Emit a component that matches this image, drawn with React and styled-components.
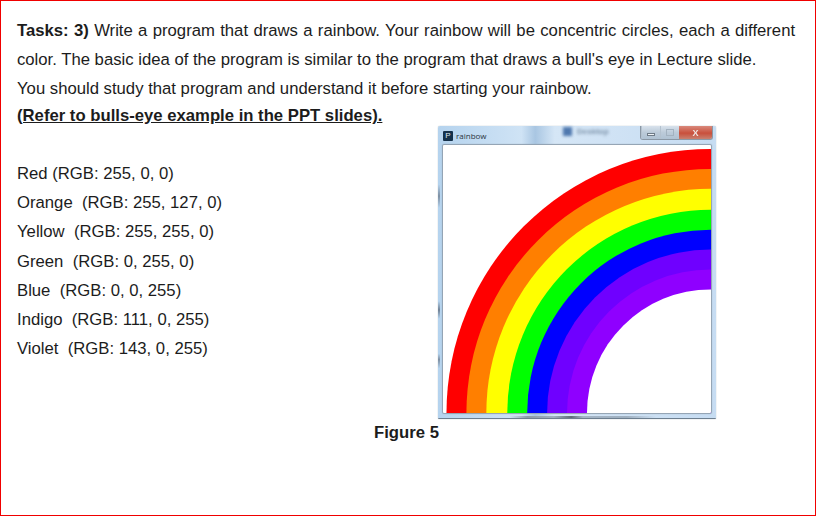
import React from "react";
import styled, { createGlobalStyle } from "styled-components";

const colors = [
  { name: "Red", gap: " ", rgb: "255, 0, 0" },
  { name: "Orange", gap: "  ", rgb: "255, 127, 0" },
  { name: "Yellow", gap: "  ", rgb: "255, 255, 0" },
  { name: "Green", gap: "  ", rgb: "0, 255, 0" },
  { name: "Blue", gap: "  ", rgb: "0, 0, 255" },
  { name: "Indigo", gap: "  ", rgb: "111, 0, 255" },
  { name: "Violet", gap: "  ", rgb: "143, 0, 255" },
];

const bands = [
  { r: 265, fill: "#ff0000" },
  { r: 245, fill: "#ff7f00" },
  { r: 225, fill: "#ffff00" },
  { r: 204, fill: "#00ff00" },
  { r: 184, fill: "#0000ff" },
  { r: 164, fill: "#6f00ff" },
  { r: 144, fill: "#8f00ff" },
  { r: 124, fill: "#ffffff" },
];

const GlobalStyle = createGlobalStyle`
  html, body {
    margin: 0;
    padding: 0;
    background: #fff;
  }
  body {
    font-family: "Liberation Sans", Arial, sans-serif;
    color: #1c1c1c;
  }
`;

const Page = styled.div`
  width: 816px;
  height: 516px;
  box-sizing: border-box;
  border: 1px solid #f00000;
  padding: 15px 16px 0;
  overflow: hidden;
`;

const Line = styled.p`
  margin: 0;
  font-size: 16.7px;
  line-height: 29px;
  white-space: nowrap;
  word-spacing: ${(props) => props.$spread || 0}px;
`;

const Refer = styled(Line)`
  font-weight: 700;
  line-height: 26px;
  text-decoration: underline;
`;

const Columns = styled.div`
  display: flex;
  align-items: flex-start;
`;

const ColorList = styled.ul`
  list-style: none;
  margin: 0;
  padding: 30px 0 0;
  width: 357px;
`;

const ColorItem = styled.li`
  font-size: 16.7px;
  line-height: 29.2px;
  white-space: pre;
`;

const Figure = styled.figure`
  margin: -3px 0 0;
  display: flex;
  flex-direction: column;
`;

const Window = styled.div`
  position: relative;
  margin-left: 64px;
  width: 278px;
  height: 293px;
  box-sizing: border-box;
  padding: 0 5px 5px;
  display: flex;
  flex-direction: column;
  border-radius: 2px 2px 1px 1px;
  border-bottom: 1px solid #6d7f90;
  box-shadow: 0 0 1px #7f8c98;
  background:
    linear-gradient(180deg, transparent 20%, #7d8fa3 24%, transparent 28%, transparent 60%, #6f8195 63%, transparent 66%, transparent 78%, #7d8fa3 80%, transparent 83%) left / 2px 100% no-repeat,
    linear-gradient(90deg, #b5d3ee 0%, #cfe3f5 30%, #a9c6e2 35%, #d5e6f6 42%, #c6dcf2 100%);
`;

const BottomShade = styled.span`
  position: absolute;
  left: 72px;
  right: 60px;
  bottom: 0;
  height: 2px;
  background: linear-gradient(90deg, transparent 0%, #8c9aa8 12%, #9fb0c0 30%, #5f6c78 42%, #a4b5c6 50%, #9fb0c0 80%, transparent 100%);
`;

const TitleBar = styled.div`
  position: relative;
  height: 19px;
  flex: none;
  display: flex;
  align-items: center;
  gap: 3px;
`;

const AppIcon = styled.span`
  width: 10px;
  height: 10px;
  border-radius: 1px;
  background: #14304a;
  color: #dfe8f0;
  font-size: 8px;
  line-height: 10px;
  text-align: center;
`;

const TitleText = styled.span`
  font-family: "Open Sans", sans-serif;
  font-size: 8px;
  color: #2a343e;
`;

const BlurredDesktop = styled.span`
  position: absolute;
  left: 120px;
  top: 1px;
  display: flex;
  align-items: center;
  gap: 5px;
  font-size: 8px;
  font-weight: 700;
  color: #7d93aa;
  filter: blur(1.4px);

  &::before {
    content: "";
    width: 9px;
    height: 9px;
    background: #4f78ae;
  }
`;

const Controls = styled.div`
  position: absolute;
  right: -2px;
  top: 0;
  display: flex;
  height: 13px;
  border: 1px solid #8b98a5;
  border-top: none;
  border-radius: 0 0 3px 3px;
  overflow: hidden;
  filter: blur(0.4px);
`;

const ControlButton = styled.span`
  width: ${(props) => (props.$close ? 33 : 18)}px;
  display: flex;
  align-items: center;
  justify-content: center;
  border-left: ${(props) => (props.$close ? "none" : "1px solid #b4c2cf")};
  color: #efe6e2;
  font-size: 9px;
  font-weight: 700;
  background: ${(props) =>
    props.$close
      ? "linear-gradient(180deg, #d9897c 0%, #c9503c 55%, #c9806f 100%)"
      : "linear-gradient(180deg, #d8e2ec 0%, #bccbd9 50%, #b0c2d3 100%)"};
`;

const MinimizeGlyph = styled.i`
  width: 8px;
  height: 3px;
  margin-top: 4px;
  background: #eef2f6;
  border: 1px solid #6f7b87;
  box-sizing: border-box;
`;

const MaximizeGlyph = styled.i`
  width: 8px;
  height: 7px;
  border: 1px solid #a3b2c0;
  box-sizing: border-box;
`;

const Canvas = styled.svg`
  display: block;
  width: 268px;
  height: 269px;
  background: #fff;
  box-shadow: 0 0 1px 1px #8f9fae;
  border-radius: 1px;
`;

const Caption = styled.figcaption`
  margin-top: 4px;
  font-size: 16.7px;
  line-height: 20px;
  font-weight: 700;
`;

export default function App() {
  return (
    <>
      <GlobalStyle />
      <Page>
        <Line $spread={0.7}>
          <b>Tasks: 3)</b> Write a program that draws a rainbow. Your rainbow will be concentric circles, each a different
        </Line>
        <Line>color. The basic idea of the program is similar to the program that draws a bull's eye in Lecture slide.</Line>
        <Line>You should study that program and understand it before starting your rainbow.</Line>
        <Refer>(Refer to bulls-eye example in the PPT slides).</Refer>
        <Columns>
          <ColorList>
            {colors.map((c) => (
              <ColorItem key={c.name}>
                {c.name}
                {c.gap}(RGB: {c.rgb})
              </ColorItem>
            ))}
          </ColorList>
          <Figure>
            <Window>
              <TitleBar>
                <AppIcon>P</AppIcon>
                <TitleText>rainbow</TitleText>
                <BlurredDesktop>Desktop</BlurredDesktop>
                <Controls>
                  <ControlButton>
                    <MinimizeGlyph />
                  </ControlButton>
                  <ControlButton>
                    <MaximizeGlyph />
                  </ControlButton>
                  <ControlButton $close>X</ControlButton>
                </Controls>
              </TitleBar>
              <Canvas viewBox="0 0 268 269">
                {bands.map((b) => (
                  <circle key={b.r} cx="268" cy="269" r={b.r} fill={b.fill} />
                ))}
              </Canvas>
              <BottomShade />
            </Window>
            <Caption>Figure 5</Caption>
          </Figure>
        </Columns>
      </Page>
    </>
  );
}
